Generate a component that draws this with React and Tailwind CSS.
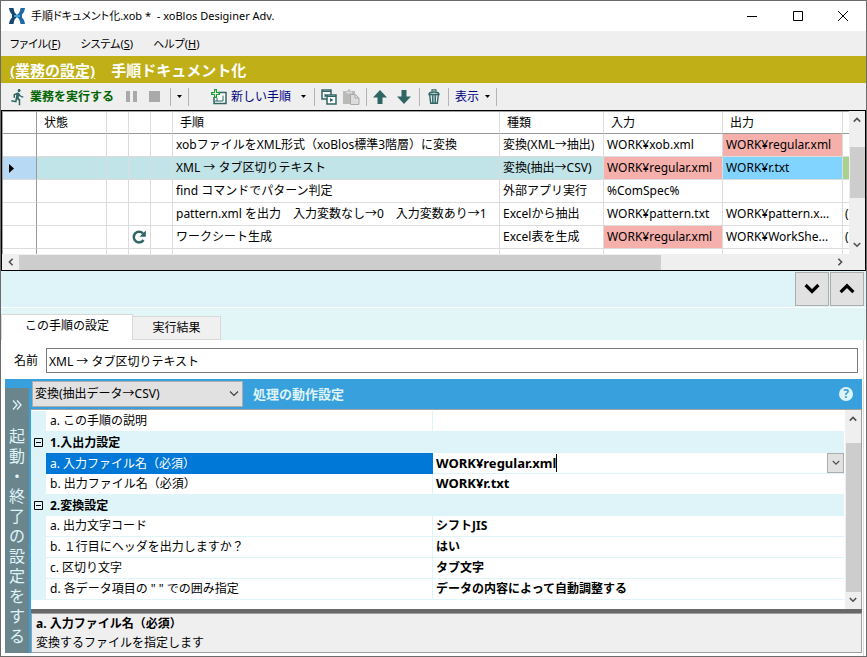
import { useState } from "react"
import { MdDirectionsRun } from "react-icons/md"

const steps = [
  { name: "xobファイルをXML形式（xoBlos標準3階層）に変換", kind: "変換(XML→抽出)", input: "WORK¥xob.xml", output: "WORK¥regular.xml", outputMark: "bg-[#f6b0ac]" },
  { name: "XML → タブ区切りテキスト", kind: "変換(抽出→CSV)", input: "WORK¥regular.xml", inputMark: "bg-[#f6b0ac]", output: "WORK¥r.txt", outputMark: "bg-[#80d4ff]", extraMark: "bg-[#a9d18e]", current: true },
  { name: "find コマンドでパターン判定", kind: "外部アプリ実行", input: "%ComSpec%", output: "" },
  { name: "pattern.xml を出力　入力変数なし→0　入力変数あり→1", kind: "Excelから抽出", input: "WORK¥pattern.txt", output: "WORK¥pattern.x...", extra: "(" },
  { name: "ワークシート生成", kind: "Excel表を生成", input: "WORK¥regular.xml", inputMark: "bg-[#f6b0ac]", output: "WORK¥WorkShe...", extra: "(", loop: true },
]

const props = [
  { label: "a. この手順の説明", value: "" },
  { category: "1.入出力設定" },
  { label: "a. 入力ファイル名（必須）", value: "WORK¥regular.xml", active: true },
  { label: "b. 出力ファイル名（必須）", value: "WORK¥r.txt", path: true },
  { category: "2.変換設定" },
  { label: "a. 出力文字コード", value: "シフトJIS" },
  { label: "b. １行目にヘッダを出力しますか？", value: "はい" },
  { label: "c. 区切り文字", value: "タブ文字" },
  { label: "d. 各データ項目の \" \" での囲み指定", value: "データの内容によって自動調整する" },
]

function Chevron({ dir = "down", size = 8, weight = 2, className = "" }) {
  const paths = {
    down: "M1 2.5 5 6.5 9 2.5",
    up: "M1 7 5 3 9 7",
    left: "M7 1 3 5 7 9",
    right: "M3 1 7 5 3 9",
  }
  return (
    <svg viewBox="0 0 10 10" width={size} height={size} className={className} fill="none" stroke="currentColor" strokeWidth={weight}>
      <path d={paths[dir]} />
    </svg>
  )
}

function Caret() {
  return (
    <svg viewBox="0 0 5 3" width="5" height="3">
      <path d="M0 0h5L2.500 3z" fill="#000" />
    </svg>
  )
}

function Separator() {
  return <span className="h-[18px] w-px bg-[#b4b4b4]" />
}

function Logo() {
  return (
    <svg viewBox="0 0 16 16" width="16" height="16">
      <path d="M0 0h4.500C5 4 6 5.500 8 7v2c-2 1.500-3 3-3.500 7H0c.5-3.500 1.500-5 3-6.500v-3C1.500 5 .5 3.500 0 0z" fill="#16456f" />
      <path d="M16 0h-4.500C11 4 10 5.500 8 7v2c2 1.500 3 3 3.500 7H16c-.5-3.500-1.500-5-3-6.500v-3c1.500-1.500 2.500-3 3-6.500z" fill="#1c6aa5" />
      <path d="M5 7h6v2H5z" fill="#35a3d8" />
    </svg>
  )
}

function TitleBar() {
  return (
    <header className="flex h-[30px] items-center bg-white pl-2">
      <Logo />
      <h1 className="ml-[6px] text-[11px] [font-feature-settings:'palt']">手順ドキュメント化.xob *&nbsp; - xoBlos Desiginer Adv.</h1>
      <div className="ml-auto flex">
        <button aria-label="最小化" className="flex h-[29px] w-[46px] items-center justify-center">
          <svg width="10" height="10"><path d="M0 5.500h10" stroke="#000" /></svg>
        </button>
        <button aria-label="最大化" className="flex h-[29px] w-[45px] items-center justify-center">
          <svg width="10" height="10"><path d="M.5.5h9v9h-9z" stroke="#000" fill="none" /></svg>
        </button>
        <button aria-label="閉じる" className="flex h-[29px] w-[46px] items-center justify-center">
          <svg width="10" height="10"><path d="M0 0l10 10M10 0L0 10" stroke="#000" /></svg>
        </button>
      </div>
    </header>
  )
}

function MenuBar() {
  return (
    <nav className="flex h-[25px] items-center gap-5 bg-[#efefef] pl-[9px] text-[11px] [font-feature-settings:'palt']">
      <button>ファイル(<u>F</u>)</button>
      <button>システム(<u>S</u>)</button>
      <button>ヘルプ(<u>H</u>)</button>
    </nav>
  )
}

function Toolbar() {
  return (
    <div className="flex h-[27px] items-center bg-[#efefef] pl-2 text-xs">
      <button className="flex items-center gap-[3px] font-bold text-[#006400]">
        <MdDirectionsRun size={18} color="#2f6664" />
        業務を実行する
      </button>
      <button aria-label="一時停止" className="ml-3 flex gap-[3px]">
        <span className="h-[11px] w-1 bg-[#a9a9a9]" />
        <span className="h-[11px] w-1 bg-[#a9a9a9]" />
      </button>
      <button aria-label="停止" className="ml-3 size-[11px] bg-[#a9a9a9]" />
      <div className="ml-[10px] flex items-center gap-[6px]">
        <Separator />
        <button aria-label="実行オプション"><Caret /></button>
        <Separator />
      </div>
      <button className="ml-[22px] flex items-center gap-1 text-[#00007f]">
        <svg viewBox="0 0 16 16" width="16" height="16">
          <path d="M7 3.500h8v11H3V8" fill="#fff" stroke="#2f6664" strokeWidth="1.500" />
          <path d="M6 6.500h6.500V12H6z" fill="#fff" stroke="none" />
          <path d="M3.500 12H12V6.500M6 9v3" stroke="#2f6664" fill="none" />
          <path d="M3 0h3v3h3v3H6v3H3V6H0V3h3z" fill="#239b3d" />
          <path d="M4 1.500h1v2.500h2.500v1H5v2.500H4V5H1.500V4H4z" fill="#d8f5d8" />
        </svg>
        新しい手順
        <span className="ml-[6px]"><Caret /></span>
      </button>
      <div className="ml-2 flex items-center gap-[6px]">
        <Separator />
        <button aria-label="コピー">
          <svg viewBox="0 0 16 16" width="16" height="16" fill="#fff" stroke="#2f6664">
            <path d="M1 1h9v9H1z" strokeWidth="1.500" />
            <path d="M1 2.500h9" />
            <path d="M3.500 4.500v4l3-2z" fill="#2f6664" stroke="none" />
            <path d="M6 6h9v9H6z" strokeWidth="1.500" />
            <path d="M6 7.500h9" />
            <path d="M9 9v4l3.500-2z" fill="#2f6664" stroke="none" />
          </svg>
        </button>
        <button aria-label="貼り付け">
          <svg viewBox="0 0 17 16" width="17" height="16">
            <path d="M0 2h4L6 0l2 2h4v3H8v10H0z" fill="#b9b9b9" />
            <path d="M3 2.500h6v2H3z" fill="#d9d9d9" />
            <path d="M7.500 5.500h5l3.500 3.500v6.500H7.500z" fill="#dcdcdc" stroke="#aaa" />
            <path d="M12 5.500V9h4" fill="none" stroke="#aaa" />
          </svg>
        </button>
        <Separator />
        <button aria-label="上へ" className="pr-1">
          <svg viewBox="0 0 14 14" width="14" height="14"><path d="M7 0l7 7.500H9.500V14h-5V7.500H0z" fill="#2f6664" /></svg>
        </button>
        <button aria-label="下へ" className="pr-[2px]">
          <svg viewBox="0 0 14 14" width="14" height="14"><path d="M7 14l7-7.500H9.500V0h-5v6.500H0z" fill="#2f6664" /></svg>
        </button>
        <Separator />
        <button aria-label="削除" className="px-[2px]">
          <svg viewBox="0 0 12 15" width="12" height="15" fill="none" stroke="#2f6664">
            <path d="M4 2.500V.8h4v1.700" strokeWidth="1.200" />
            <path d="M1 5.500c0-2 2-2.500 5-2.500s5 .5 5 2.500z" strokeWidth="1.400" />
            <path d="M1.700 6l1 8.300h6.600l1-8.300" strokeWidth="1.400" />
            <path d="M4.300 6l.4 8M6 6v8M7.700 6l-.4 8" />
          </svg>
        </button>
        <Separator />
        <button className="flex items-center gap-[6px] text-[#00007f]">表示 <Caret /></button>
        <Separator />
      </div>
    </div>
  )
}

const cell = "truncate border-r border-b border-[#dcdcdc] px-[3px] text-left font-normal"

function StepTable() {
  return (
    <section className="border border-black bg-[#efefef]">
      <div className="flex">
        <div className="h-[143px] min-w-0 flex-1 overflow-hidden border-t border-l border-[#a0a0a0] bg-white">
          <table className="w-full table-fixed border-separate border-spacing-0 text-xs">
            <colgroup>
              <col className="w-[34px]" />
              <col className="w-[70px]" />
              <col className="w-[22px]" />
              <col className="w-[22px]" />
              <col className="w-[22px]" />
              <col />
              <col className="w-[104px]" />
              <col className="w-[119px]" />
              <col className="w-[120px]" />
              <col className="w-[6px]" />
            </colgroup>
            <thead>
              <tr className="h-[22px] *:truncate *:border-r *:border-b *:border-r-[#dcdcdc] *:border-b-[#999] *:px-[7px] *:text-left *:font-normal">
                <th className="border-r-[#999]!"></th>
                <th>状態</th>
                <th></th>
                <th></th>
                <th></th>
                <th>手順</th>
                <th>種類</th>
                <th>入力</th>
                <th>出力</th>
                <th className="border-r-0! p-0!"></th>
              </tr>
            </thead>
            <tbody>
              {steps.map(s => (
                <tr key={s.name} className={s.current ? "h-[23px] bg-[#c1e4e8]" : "h-[23px]"}>
                  <td className={`border-r border-b border-r-[#999] border-b-[#dcdcdc] ${s.current ? "bg-[#b8d9f3]" : ""}`}>
                    {s.current && (
                      <svg viewBox="0 0 5 9" width="5" height="9" className="ml-[6px]"><path d="M0 0l5 4.500L0 9z" /></svg>
                    )}
                  </td>
                  <td className={cell}></td>
                  <td className={cell}></td>
                  <td className={cell}>
                    {s.loop && (
                      <svg viewBox="0 0 14 14" width="14" height="14">
                        <path d="M11.500 10A5.300 5.300 0 1 1 11 3.500" fill="none" stroke="#2f6664" strokeWidth="2.500" />
                        <path d="M13.800.5v6.300H7.500z" fill="#2f6664" />
                      </svg>
                    )}
                  </td>
                  <td className={cell}></td>
                  <td className={cell}>{s.name}</td>
                  <td className={cell}>{s.kind}</td>
                  <td className={`${cell} ${s.inputMark || "bg-white"}`}>{s.input}</td>
                  <td className={`${cell} ${s.outputMark || "bg-white"}`}>{s.output}</td>
                  <td className={`overflow-hidden border-b border-[#dcdcdc] pl-[2px] ${s.extraMark || "bg-white"}`}>{s.extra}</td>
                </tr>
              ))}
              <tr className="h-[23px]">
                <td className="border-r border-[#999]"></td>
                {[1, 2, 3, 4, 5, 6, 7, 8].map(n => <td key={n} className={cell}></td>)}
                <td></td>
              </tr>
            </tbody>
          </table>
        </div>
        <div className="flex w-4 flex-col items-center justify-between py-[5px] text-[#505050]">
          <Chevron dir="up" />
          <div className="mt-[-20px] h-[51px] w-[15px] bg-[#cdcdcd]" />
          <Chevron />
        </div>
      </div>
      <div className="flex h-4 items-center justify-between pr-[21px] text-[#505050]">
        <div className="flex flex-1 items-center">
          <span className="flex w-[17px] justify-center"><Chevron dir="left" /></span>
          <div className="h-[15px] w-[77%] bg-[#cdcdcd]" />
        </div>
        <Chevron dir="right" />
      </div>
    </section>
  )
}

function SideStrip() {
  return (
    <button className="mt-[9px] flex w-6 shrink-0 flex-col items-center bg-[#6b858d] pt-3 text-[#dff4f8]">
      <svg viewBox="0 0 10 10" width="10" height="10" fill="none" stroke="currentColor" strokeWidth="1.300">
        <path d="M1 0.500 5 5 1 9.500M5 0.500 9 5 5 9.500" />
      </svg>
      <span className="mt-4 w-4 text-base leading-5 [line-break:anywhere]">起動・終了の設定をする</span>
    </button>
  )
}

function PropertyGrid() {
  const [file, setFile] = useState("WORK¥regular.xml")

  return (
    <div className="flex flex-1 border-t border-r border-[#a0a0a0] bg-white">
      <div className="min-w-0 flex-1 pt-px pb-[5px]">
        <table className="w-full table-fixed border-separate border-spacing-0 text-xs">
          <colgroup>
            <col className="w-[15px]" />
            <col className="w-[387px]" />
            <col />
          </colgroup>
          <tbody>
            {props.map(p => p.category ? (
              <tr key={p.category} className="h-[21px] bg-[#dff4f8]">
                <td>
                  <svg width="9" height="9" className="ml-[3px]">
                    <path d="M.5.5h8v8h-8zM2 4.500h5" fill="none" stroke="#000" />
                  </svg>
                </td>
                <th colSpan={2} className="pl-1 text-left font-bold">{p.category}</th>
              </tr>
            ) : (
              <tr key={p.label} className="h-[21px]">
                <td className="bg-[#dff4f8]"></td>
                <td className={p.active ? "bg-[#0078d7] pl-1 text-white" : "border-r border-b border-[#dff4f8] pl-1"}>{p.label}</td>
                <td className={p.path ? "border-b border-[#dff4f8] pl-[3px] text-[13px] font-bold" : "border-b border-[#dff4f8] pl-[3px] font-bold"}>
                  {p.active ? (
                    <div className="flex h-5 items-center">
                      <input
                        aria-label={p.label}
                        value={file}
                        onChange={e => setFile(e.target.value)}
                        className="h-[18px] border-r border-black text-[13px] outline-none field-sizing-content"
                      />
                      <button aria-label="候補を表示" className="ml-auto flex h-5 w-[17px] items-center justify-center border border-[#adadad] bg-[#e1e1e1] text-[#505050]">
                        <Chevron weight={1.5} />
                      </button>
                    </div>
                  ) : p.value}
                </td>
              </tr>
            ))}
          </tbody>
        </table>
      </div>
      <div className="ml-px flex w-4 flex-col items-center bg-[#efefef] py-[5px] text-[#505050]">
        <Chevron dir="up" />
        <div className="mt-5 mb-1 w-[15px] flex-1 bg-[#cdcdcd]" />
        <Chevron />
      </div>
    </div>
  )
}

export default function App() {
  const [name, setName] = useState("XML → タブ区切りテキスト")

  return (
    <div className="flex min-h-screen flex-col border border-[#6b6b6b] bg-white font-['Noto_Sans','Noto_Sans_CJK_JP',sans-serif] leading-4 text-black">
      <TitleBar />
      <MenuBar />
      <div className="flex h-[27px] items-center gap-4 bg-[#c0af17] pl-[9px] text-[15px] font-bold text-white">
        <a href="#job" className="underline underline-offset-2">(業務の設定)</a>
        <h2>手順ドキュメント化</h2>
      </div>
      <Toolbar />
      <StepTable />

      <div className="flex h-9 items-center justify-end gap-px bg-[#dff4f8] pr-[2px]">
        <button aria-label="次の手順" className="flex size-[34px] items-center justify-center border border-[#adadad] bg-[#e1e1e1]">
          <Chevron size={16} weight={2} />
        </button>
        <button aria-label="前の手順" className="flex size-[34px] items-center justify-center border border-[#adadad] bg-[#e1e1e1]">
          <Chevron dir="up" size={16} weight={2} />
        </button>
      </div>

      <div role="tablist" className="flex items-end border-t border-white bg-[#e2f5f7] pt-[6px] text-xs">
        <button role="tab" aria-selected="true" className="h-[26px] w-[132px] border border-b-0 border-[#d9d9d9] bg-white pb-1">この手順の設定</button>
        <button role="tab" aria-selected="false" className="h-6 w-[88px] border border-l-0 border-[#d9d9d9] bg-[#f0f0f0]">実行結果</button>
      </div>

      <main className="mr-[2px] flex flex-1 flex-col border-r border-[#dcdcdc] pt-2 pr-px pb-[3px] pl-1">
        <div className="flex items-center gap-2 pr-1 pl-[9px] text-xs">
          <label htmlFor="step-name">名前</label>
          <input
            id="step-name"
            value={name}
            onChange={e => setName(e.target.value)}
            className="h-[25px] min-w-0 flex-1 border border-[#7a7a7a] px-[2px] outline-none"
          />
        </div>

        <div className="mt-[6px] flex flex-1 bg-[#38a0dc]">
          <SideStrip />
          <div className="ml-[2px] flex min-w-0 flex-1 flex-col">
            <div className="flex h-[30px] items-center px-px">
              <div className="relative">
                <select aria-label="処理の種類" className="h-[26px] w-[211px] appearance-none border border-[#adadad] bg-[#e1e1e1] px-[2px] text-xs">
                  <option>変換(抽出データ→CSV)</option>
                </select>
                <Chevron size={10} weight={1.2} className="pointer-events-none absolute top-2 right-1 text-[#404040]" />
              </div>
              <h3 className="ml-[10px] text-[13px] font-bold text-[#dff4f8]">処理の動作設定</h3>
              <button aria-label="ヘルプ" className="mr-2 ml-auto size-[14px] rounded-full bg-[#dff4f8] text-xs leading-[14px] font-bold text-[#38a0dc]">?</button>
            </div>
            <PropertyGrid />
            <div className="h-1 bg-[#696969]" />
            <div className="border border-[#a0a0a0] bg-[#efefef] px-1 text-xs leading-[19px]">
              <p className="font-bold">a. 入力ファイル名（必須）</p>
              <p>変換するファイルを指定します</p>
            </div>
          </div>
        </div>
      </main>
    </div>
  )
}
